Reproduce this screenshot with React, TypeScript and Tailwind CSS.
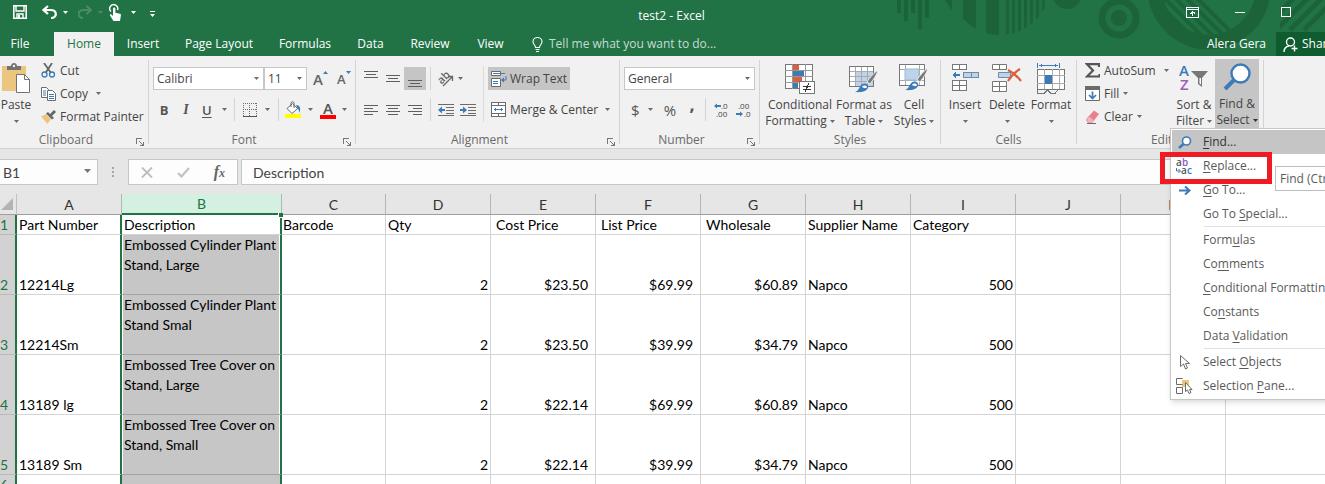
import { Fragment, type ReactNode } from "react";
import clsx from "clsx";

const GRAY = "#6b6b6b";
const BLUE = "#3d7ab8";

function Svg({ w, h, children, crisp = false }: { w: number; h: number; children: ReactNode; crisp?: boolean }) {
  return (
    <svg
      width={w}
      height={h}
      viewBox={`0 0 ${w} ${h}`}
      fill="none"
      aria-hidden="true"
      className="shrink-0"
      shapeRendering={crisp ? "crispEdges" : undefined}
    >
      {children}
    </svg>
  );
}

function Caret({ color = "#6b6b6b" }: { color?: string }) {
  return (
    <Svg w={5} h={3}>
      <path d="M0 0h5L2.500 3z" fill={color} />
    </Svg>
  );
}

/* ---------- title bar ---------- */

function HeaderArt() {
  return (
    <svg width="440" height="56" viewBox="885 0 440 56" className="absolute right-0 top-0" aria-hidden="true">
      <defs>
        <clipPath id="art-a">
          <circle cx="1000" cy="-15" r="50" />
        </clipPath>
        <clipPath id="art-b">
          <circle cx="1209" cy="-12" r="50" />
        </clipPath>
        <clipPath id="art-c">
          <path d="M1280 0h45v32h-45z" />
        </clipPath>
      </defs>
      <g fill="#1d6339">
        <path d="M897 0h4v13h-4zM904 0h4v21h-4zM911 0h4v13h-4zM918 0h4v29h-4zM925 0h4v18h-4zM945 0h7v11z" />
        <g clipPath="url(#art-a)">
          <path d="M963 0h13v40h-13zM986 0h13v40h-13zM1006 0h3v40h-3zM1012 0h3v40h-3zM1018 0h3v40h-3zM1024 0h3v40h-3zM1030 0h3v40h-3zM1036 0h3v40h-3zM1042 0h3v40h-3z" />
        </g>
        <circle cx="1067" cy="-5" r="14" />
        <circle cx="1119" cy="18" r="8" />
      </g>
      <g stroke="#1d6339" fill="none">
        <circle cx="1119" cy="18" r="17" strokeWidth="7" />
        <circle cx="1209" cy="-12" r="54" strokeWidth="15" />
        <g clipPath="url(#art-b)" strokeWidth="4">
          <path d="M1150-5l60 60M1161-5l60 60M1172-5l60 60M1183-5l60 60M1194-5l60 60" />
        </g>
        <g clipPath="url(#art-c)" strokeWidth="5">
          <path d="M1262 30l40-40M1276 30l40-40M1290 30l40-40M1304 30l40-40" />
        </g>
      </g>
    </svg>
  );
}

function QuickAccess() {
  return (
    <div className="flex h-6 items-center text-white">
      <button aria-label="Save" className="ml-[13px]">
        <Svg w={14} h={14}>
          <path d="M0.8 0.8h12.4v12.4H0.8z" stroke="#fff" strokeWidth="1.6" />
          <path d="M3 1v5h8V1M4 13V9h6v4" stroke="#fff" strokeWidth="1.4" />
          <path d="M5 10h2v3H5z" fill="#fff" />
        </Svg>
      </button>
      <button aria-label="Undo" className="ml-[15px] flex items-center gap-[6px]">
        <Svg w={15} h={14}>
          <path d="M6 1L1.5 5 6 9M2 5h6.500c7 0 7 8 0.500 8" stroke="#fff" strokeWidth="2.2" />
        </Svg>
        <Caret color="#fff" />
      </button>
      <button aria-label="Redo" className="ml-[10px] flex items-center gap-[6px]">
        <Svg w={14} h={14}>
          <path d="M8.500 1L13 5 8.500 9M12 5H6C-1 5-1 13 5 13" stroke="#4b8c68" strokeWidth="2" />
        </Svg>
        <Caret color="#4b8c68" />
      </button>
      <button aria-label="Touch mode" className="ml-[6px] flex items-center gap-[9px]">
        <Svg w={13} h={17}>
          <path d="M2 7.500A4 4 0 1 1 8.500 6" stroke="#fff" strokeWidth="1.4" />
          <path d="M4 4.500c0-1.500 2.400-1.500 2.400 0v4.300l4.600 1c.8.200 1 .8.900 1.500L11 17H4.500L1 11.500c-.5-1 .7-1.500 1.400-1L4 12z" fill="#fff" />
        </Svg>
        <Caret color="#fff" />
      </button>
      <button aria-label="Customize Quick Access Toolbar" className="ml-[14px] mt-1">
        <Svg w={5} h={6}>
          <path d="M0 0h5v1H0zM0 3h5L2.500 6z" fill="#fff" />
        </Svg>
      </button>
    </div>
  );
}

const TABS = [
  { name: "Insert", width: "w-[58px]" },
  { name: "Page Layout", width: "w-[94px]" },
  { name: "Formulas", width: "w-[78px]" },
  { name: "Data", width: "w-[53px]" },
  { name: "Review", width: "w-[66px]" },
  { name: "View", width: "w-[55px]" },
];

function TitleBar() {
  return (
    <header className="relative shrink-0 bg-[#217346] text-white">
      <HeaderArt />
      <div className="relative flex h-8 items-start">
        <div className="flex-1">
          <QuickAccess />
        </div>
        <h1 className="ml-[18px] pt-2">test2 - Excel</h1>
        <div className="flex h-6 flex-1 items-center justify-end gap-9">
          <button aria-label="Ribbon Display Options">
            <Svg w={13} h={11} crisp>
              <path d="M.5.5h12v10H.5zM0 2.500h13M6.500 9V4M4 6.500h1v-1h1M9 6.500H8v-1H7" stroke="#fff" />
            </Svg>
          </button>
          <button aria-label="Minimize">
            <Svg w={10} h={10} crisp>
              <path d="M0 5.500h10" stroke="#fff" />
            </Svg>
          </button>
          <button aria-label="Maximize" className="mr-[34px]">
            <Svg w={10} h={10} crisp>
              <path d="M.5.5h9v9h-9z" stroke="#fff" />
            </Svg>
          </button>
        </div>
      </div>
      <nav className="relative flex h-6 items-stretch">
        <button className="w-[54px] pr-[14px]">File</button>
        <button className="w-[60px] bg-[#f1f1f1] text-[#217346]">Home</button>
        {TABS.map((t) => (
          <button key={t.name} className={clsx("whitespace-nowrap", t.width)}>
            {t.name}
          </button>
        ))}
        <button className="ml-[14px] flex items-center gap-[6px] text-[#c6dccf]">
          <Svg w={11} h={15}>
            <path d="M3.500 10.500C3.500 8 1 7.500 1 4.800a4.500 4.300 0 0 1 9 0c0 2.700-2.500 3.200-2.500 5.700zM3.500 12.500h4M4 14.500h3" stroke="#fff" strokeWidth="1.1" />
          </Svg>
          Tell me what you want to do...
        </button>
        <div className="flex-1" />
        <button className="pr-[10px]">Alera Gera</button>
        <button className="flex w-[49px] items-center gap-1 overflow-hidden bg-[#0e5c2f] pl-[7px]">
          <Svg w={15} h={15}>
            <circle cx="7.500" cy="5" r="4" stroke="#fff" strokeWidth="1.4" />
            <path d="M1 15c0-3.500 2-5.500 5-6M11.500 8.500v6M8.500 11.500h6" stroke="#fff" strokeWidth="1.4" />
          </Svg>
          Share
        </button>
      </nav>
    </header>
  );
}

/* ---------- ribbon ---------- */

function Group({ label, width, launcher = false, children }: { label: string; width: string; launcher?: boolean; children: ReactNode }) {
  return (
    <section aria-label={label} className={clsx("flex shrink-0", width)}>
      <div className="flex min-w-0 flex-1 flex-col">
        <div className="flex h-[76px]">{children}</div>
        <div className="flex h-4 items-center text-[#6a6a6a]">
          <span className="flex-1 text-center">{label}</span>
          {launcher && (
            <button aria-label={`${label} settings`} className="mx-1 mt-1">
              <Svg w={8} h={8} crisp>
                <path d="M.5 6V.5H6M3 3l4 4M7.500 3.500v4h-4" stroke="#777" />
              </Svg>
            </button>
          )}
        </div>
      </div>
      <div className="my-1 w-px bg-[#d4d4d4]" />
    </section>
  );
}

function Rule() {
  return <span className="h-[23px] w-px bg-[#d4d4d4]" />;
}

function Tool({ label, on = false, children }: { label: string; on?: boolean; children: ReactNode }) {
  return (
    <button aria-label={label} className={clsx("flex h-[23px] w-[22px] items-center justify-center", on && "bg-[#c5c5c5]")}>
      {children}
    </button>
  );
}

function Combo({ label, value, width }: { label: string; value: string; width: string }) {
  return (
    <div className={clsx("relative", width)}>
      <select
        aria-label={label}
        defaultValue={value}
        className="h-[23px] w-full appearance-none border border-[#c6c6c6] bg-white pl-[3px]"
      >
        <option>{value}</option>
      </select>
      <span className="pointer-events-none absolute right-[5px] top-[10px]">
        <Caret />
      </span>
    </div>
  );
}

function BigButton({ lines, caret, width, icon }: { lines: string[]; caret: "inline" | "below"; width: string; icon: ReactNode }) {
  return (
    <button className={clsx("flex flex-col items-center whitespace-nowrap pt-[7px]", width)}>
      <span className="flex h-[34px]">{icon}</span>
      {lines.map((line, i) => (
        <span key={line} className="flex items-center gap-[3px] leading-4">
          {line}
          {caret === "inline" && i === lines.length - 1 && <Caret />}
        </span>
      ))}
      {caret === "below" && (
        <span className="flex h-4 items-center">
          <Caret />
        </span>
      )}
    </button>
  );
}

function Clipboard() {
  return (
    <Group label="Clipboard" width="w-[149px]" launcher>
      <BigButton
        lines={["Paste"]}
        caret="below"
        width="w-9 pr-1"
        icon={
          <Svg w={28} h={32}>
            <path d="M0 3h24v25H0z" fill="#ecc57f" />
            <path d="M5 7V3h4c0-4 6-4 6 0h4v4z" fill="#737373" />
            <circle cx="12" cy="3" r="1.200" fill="#f1f1f1" />
            <path d="M14.500 11.500h8l5 5v13h-13z" fill="#fff" stroke="#737373" />
            <path d="M22.500 11.500v5h5" stroke="#737373" />
          </Svg>
        }
      />
      <div className="flex flex-col pl-[5px] pt-[3px]">
        <button className="flex h-[23px] items-center gap-1">
          <Svg w={15} h={15}>
            <path d="M3 0l7 10M11 0L4.500 10" stroke="#666" strokeWidth="1.800" />
            <circle cx="3.500" cy="11.500" r="2.500" stroke={BLUE} strokeWidth="1.300" />
            <circle cx="11" cy="11.500" r="2.500" stroke={BLUE} strokeWidth="1.300" />
          </Svg>
          Cut
        </button>
        <button className="flex h-[23px] items-center gap-1">
          <Svg w={15} h={14}>
            <path d="M.5.5h5l2 2v8h-7z" fill="#fff" stroke={GRAY} />
            <path d="M2 4h3M2 6h3M2 8h3" stroke={BLUE} />
            <path d="M6.500 3.500h5l3 3v7h-8z" fill="#fff" stroke={GRAY} />
            <path d="M8 7.500h5M8 9.500h5M8 11.500h5" stroke={BLUE} />
          </Svg>
          Copy
          <span className="pl-1">
            <Caret />
          </span>
        </button>
        <button className="flex h-[23px] items-center gap-1 whitespace-nowrap">
          <Svg w={15} h={14}>
            <path d="M0 6.500l5-2.500 5 5-3.500 5z" fill="#ecc57f" />
            <path d="M5 3.500l2-1.500 6 6-2 1.500zM9 4l4-4 2 2-4 4z" fill="#666" />
          </Svg>
          Format Painter
        </button>
      </div>
    </Group>
  );
}

function FontGroup() {
  return (
    <Group label="Font" width="w-[207px]" launcher>
      <div className="flex flex-col gap-2 pl-1 pt-[11px]">
        <div className="flex items-center">
          <Combo label="Font" value="Calibri" width="w-[111px]" />
          <Combo label="Font size" value="11" width="w-[43px]" />
          <div className="flex items-center gap-[9px] pl-[6px]">
            <button aria-label="Increase Font Size" className="flex items-start text-[15px] font-semibold leading-5 text-[#666]">
              A
              <Svg w={5} h={6}>
                <path d="M0 5h5L2.500 2z" fill={BLUE} />
              </Svg>
            </button>
            <button aria-label="Decrease Font Size" className="flex items-start text-[13px] font-semibold leading-5 text-[#666]">
              A
              <Svg w={5} h={6}>
                <path d="M0 2h5L2.500 5z" fill={BLUE} />
              </Svg>
            </button>
          </div>
        </div>
        <div className="flex items-center text-[13px] text-[#555]">
          <Tool label="Bold">
            <b>B</b>
          </Tool>
          <Tool label="Italic">
            <i className="font-['Liberation_Serif',serif] text-[14px] font-bold">I</i>
          </Tool>
          <button aria-label="Underline" className="flex w-8 items-center gap-[10px] pl-[5px] font-semibold">
            <span className="underline underline-offset-2">U</span>
            <Caret />
          </button>
          <span className="w-[5px]" />
          <Rule />
          <button aria-label="Borders" className="flex w-[43px] items-center justify-center gap-2">
            <Svg w={14} h={14} crisp>
              <path d="M.5 0v13M6.500 0v13M13.500 0v13M0 .5h14M0 6.500h14" stroke={GRAY} strokeDasharray="1 1" />
              <path d="M0 13.500h14" stroke="#555" />
            </Svg>
            <Caret />
          </button>
          <Rule />
          <button aria-label="Fill Color" className="flex items-center gap-[6px] pl-[6px]">
            <Svg w={17} h={17}>
              <path d="M7.500 2.500l5 5-5.500 5-5-5z" fill="#fff" stroke="#666" />
              <path d="M6 6V2.500c0-2.500 3-2.500 3 0V7" stroke="#666" />
              <path d="M11 4c4 0 5 3 3.500 8-.5-3-1.500-4-2-4.500z" fill={BLUE} />
              <path d="M0 13h16v4H0z" fill="#ff0" />
            </Svg>
            <Caret />
          </button>
          <button aria-label="Font Color" className="flex items-center gap-[6px] pl-[7px]">
            <span className="w-4 border-b-4 border-[#f00] text-center text-[15px] font-semibold leading-[14px]">A</span>
            <Caret />
          </button>
        </div>
      </div>
    </Group>
  );
}

function Lines({ rows }: { rows: [number, number, number][] }) {
  return (
    <Svg w={14} h={16} crisp>
      {rows.map(([x, y, w]) => (
        <rect key={y} x={x} y={y} width={w} height={1} fill="#5f5f5f" />
      ))}
    </Svg>
  );
}

function IndentIcon({ right = false }: { right?: boolean }) {
  return (
    <Svg w={16} h={14}>
      <path d="M0 1.500h16M8 4.500h8M8 7.500h8M8 10.500h8M0 12.500h16" stroke={GRAY} />
      <path d={right ? "M0 6h3V3.500L7 7 3 10.500V8H0z" : "M7 6H4V3.500L0 7l4 3.500V8h3z"} fill={BLUE} />
    </Svg>
  );
}

function Alignment() {
  return (
    <Group label="Alignment" width="w-[264px]" launcher>
      <div className="flex flex-col gap-2 pl-1 pt-[11px]">
        <div className="flex items-center">
          <Tool label="Top Align">
            <Lines rows={[[0, 0, 14], [2, 3, 10], [0, 6, 14]]} />
          </Tool>
          <Tool label="Middle Align">
            <Lines rows={[[0, 4, 14], [2, 7, 10], [0, 10, 14]]} />
          </Tool>
          <Tool label="Bottom Align" on>
            <Lines rows={[[0, 9, 14], [2, 12, 10], [0, 15, 14]]} />
          </Tool>
          <span className="w-1" />
          <Rule />
          <button aria-label="Orientation" className="flex items-center gap-1 pl-[6px]">
            <Svg w={17} h={16}>
              <text x="1" y="11" fontSize="11" fontWeight="600" fill="#666" transform="rotate(-45 6 8)">
                ab
              </text>
              <path d="M6 15l9-9M11 5.500h4.500V10" stroke="#666" strokeWidth="1.300" />
            </Svg>
            <Caret />
          </button>
        </div>
        <div className="flex items-center">
          <Tool label="Align Left">
            <Lines rows={[[0, 3, 14], [0, 6, 9], [0, 9, 14], [0, 12, 9]]} />
          </Tool>
          <Tool label="Center">
            <Lines rows={[[0, 3, 14], [2, 6, 10], [0, 9, 14], [2, 12, 10]]} />
          </Tool>
          <Tool label="Align Right">
            <Lines rows={[[0, 3, 14], [5, 6, 9], [0, 9, 14], [5, 12, 9]]} />
          </Tool>
          <span className="w-1" />
          <Rule />
          <span className="w-1" />
          <Tool label="Decrease Indent">
            <IndentIcon />
          </Tool>
          <Tool label="Increase Indent">
            <IndentIcon right />
          </Tool>
        </div>
      </div>
      <span className="ml-1 mt-[10px] h-[56px] w-px bg-[#dcdcdc]" />
      <div className="flex flex-col items-start gap-2 pl-1 pt-[11px]">
        <button className="flex h-[23px] items-center gap-[3px] whitespace-nowrap bg-[#c5c5c5] px-[3px]">
          <Svg w={16} h={16}>
            <path d="M.5.5h9v4h-9zM.5 7.500h9v8h-9z" fill="#fff" stroke={GRAY} />
            <path d="M2 2.500h12M2 10.500h5M2 12.500h5M15 5v4h-4" stroke={BLUE} />
            <path d="M10 9l3-2.500v5z" fill={BLUE} />
          </Svg>
          Wrap Text
        </button>
        <button className="flex h-[23px] items-center gap-[3px] whitespace-nowrap pl-[3px]">
          <Svg w={16} h={15} crisp>
            <path d="M.5.5h14v14H.5zM0 3.500h15M0 11.500h15M7.500 0v3M7.500 12v3" stroke={GRAY} fill="#fff" />
            <path d="M3 7.500h9M4.500 6v3M10.500 6v3" stroke={BLUE} />
          </Svg>
          Merge &amp; Center
          <span className="pl-1">
            <Caret />
          </span>
        </button>
      </div>
    </Group>
  );
}

function NumberGroup() {
  return (
    <Group label="Number" width="w-[140px]" launcher>
      <div className="flex flex-col gap-2 pl-1 pt-[11px]">
        <Combo label="Number Format" value="General" width="w-[131px]" />
        <div className="flex h-[23px] items-center text-[15px] text-[#555]">
          <button className="flex w-[33px] items-center gap-2 pl-[7px]">
            $
            <Caret />
          </button>
          <button className="w-[26px]">%</button>
          <button className="w-[18px] pb-3 text-[18px] font-bold leading-4">,</button>
          <span className="w-1" />
          <Rule />
          <button aria-label="Increase Decimal" className="pl-2">
            <Svg w={16} h={15}>
              <path d="M0 4l3-2.500V3h4v2H3v1.500z" fill={BLUE} />
              <text x="7" y="7" fontSize="8" fill="#444">.0</text>
              <text x="2" y="15" fontSize="8" fill="#444">.00</text>
            </Svg>
          </button>
          <button aria-label="Decrease Decimal" className="pl-[6px]">
            <Svg w={16} h={15}>
              <path d="M7 12L4 9.500V11H0v2h4v1.500z" fill={BLUE} />
              <text x="2" y="7" fontSize="8" fill="#444">.00</text>
              <text x="8" y="15" fontSize="8" fill="#444">.0</text>
            </Svg>
          </button>
        </div>
      </div>
    </Group>
  );
}

function Brush() {
  return (
    <>
      <path d="M29 7c-3 2-9 8-11 12l3 2c3-4 7-9 8-14z" fill="#7a7a7a" stroke="#f1f1f1" />
      <path d="M6 29c5-1 4-8 9-8.500 3 0 5 2 4 4.500-2 4-8 4.500-13 4z" fill={BLUE} />
      <path d="M13 24c1-2 4-2 5 0-1 2-3 1-5 0z" fill="#fff" />
    </>
  );
}

function Styles() {
  return (
    <Group label="Styles" width="w-[181px]">
      <span className="w-1" />
      <BigButton
        lines={["Conditional", "Formatting"]}
        caret="inline"
        width="w-[72px]"
        icon={
          <Svg w={30} h={31} crisp>
            <path d="M.5 1.500h27v24H.5z" fill="#fff" stroke="#777" />
            <path d="M0 7.500h28M0 13.500h28M0 19.500h28M7.500 1v25M20.500 1v25" stroke="#999" />
            <path d="M8 2h6v5H8zM8 14h9v5H8z" fill="#d9603b" />
            <path d="M8 8h11v5H8zM8 20h5v5H8z" fill={BLUE} />
            <path d="M14.500 18.500h15v12h-15z" fill="#fff" stroke="#777" />
            <path d="M18 23h8M18 26h8M24 20l-4 9" stroke="#333" />
          </Svg>
        }
      />
      <BigButton
        lines={["Format as", "Table"]}
        caret="inline"
        width="w-[56px]"
        icon={
          <Svg w={30} h={31}>
            <path d="M.5 3.500h24v20H.5z" fill="#fff" stroke="#777" />
            <path d="M6 9h18v14H6z" fill="#bcd3ea" />
            <path d="M0 8.500h25M0 13.500h25M0 18.500h25M6.500 3v20M12.500 3v20M18.500 3v20" stroke="#aaa" />
            <path d="M.5 3.500h24v20H.5z" stroke="#777" />
            <Brush />
          </Svg>
        }
      />
      <BigButton
        lines={["Cell", "Styles"]}
        caret="inline"
        width="w-11"
        icon={
          <Svg w={30} h={31}>
            <path d="M.5 1.500h25v21H.5z" fill="#fff" stroke="#777" />
            <path d="M0 6.500h26M0 17.500h26M6.500 1v21M20.500 1v21" stroke="#aaa" />
            <path d="M6 6h14v11H6z" fill="#bcd3ea" stroke="#9db8d4" />
            <path d="M.5 1.500h25v21H.5z" stroke="#777" />
            <g transform="translate(0 -2)">
              <Brush />
            </g>
          </Svg>
        }
      />
    </Group>
  );
}

function Cells() {
  return (
    <Group label="Cells" width="w-[136px]">
      <span className="w-1" />
      <BigButton
        lines={["Insert"]}
        caret="below"
        width="w-10"
        icon={
          <Svg w={27} h={29} crisp>
            <path d="M.5 1.500h14v5H.5zM7.500 1v5M.5 17.500h14v10H.5zM7.500 17v10M0 22.500h15" fill="#fff" stroke="#777" />
            <path d="M11.500 9.500h15v5h-15zM19.500 9v6" fill="#bcd3ea" stroke="#6f8ba8" />
            <path d="M0 12l4-3v2h4v2H4v2z" fill={BLUE} />
          </Svg>
        }
      />
      <BigButton
        lines={["Delete"]}
        caret="below"
        width="w-11"
        icon={
          <Svg w={30} h={29}>
            <path d="M.5 1.500h14v5H.5zM7.500 1v5M.5 18.500h14v10H.5zM7.500 18v10M0 23.500h15" fill="#fff" stroke="#777" />
            <path d="M6.500 9.500h12v5h-12z" fill="#bcd3ea" stroke="#6f8ba8" />
            <path d="M16 7c4 2 9 6 13 11M28 6c-5 3-9 7-12 12" stroke="#d9603b" strokeWidth="2.200" />
          </Svg>
        }
      />
      <BigButton
        lines={["Format"]}
        caret="below"
        width="w-11"
        icon={
          <Svg w={28} h={31} crisp>
            <path d="M.5 0v5M22.500 0v5M2 2.500h19M4.500 1v3M18.500 1v3" stroke={BLUE} />
            <path d="M.5 6.500h27v20H.5z" fill="#fff" stroke="#777" />
            <path d="M0 12.500h28M0 20.500h28M7.500 6v20M15.500 6v20M22.500 6v20" stroke="#aaa" />
            <path d="M8 12h7v9H8z" fill={BLUE} />
            <path d="M.5 26v4h7l3-3 3 3h5l3-4" stroke="#777" />
          </Svg>
        }
      />
    </Group>
  );
}

/* ---------- find & select menu ---------- */

const FindIcon = (
  <Svg w={14} h={13}>
    <circle cx="8.500" cy="5" r="4" fill="#fff" stroke={BLUE} strokeWidth="1.600" />
    <path d="M5.500 8L1 12" stroke={BLUE} strokeWidth="2.400" />
  </Svg>
);
const ReplaceIcon = (
  <Svg w={17} h={17}>
    <text x="0" y="8" fontSize="10" fontWeight="600" fill="#555">a</text>
    <text x="6" y="8" fontSize="10" fontWeight="600" fill="#8e5bb5">b</text>
    <text x="5" y="16" fontSize="10" fontWeight="600" fill="#555">a</text>
    <text x="11" y="16" fontSize="10" fontWeight="600" fill={BLUE}>c</text>
    <path d="M.5 10v3H4M2.500 11l2 2-2 2" stroke={BLUE} />
  </Svg>
);
const GoToIcon = (
  <Svg w={12} h={9}>
    <path d="M0 4.500h10M6 .500l4.500 4L6 8.500" stroke={BLUE} strokeWidth="2" />
  </Svg>
);
const PointerIcon = (
  <Svg w={10} h={15}>
    <path d="M.5.5v11l3-2.500 2 5 2-1-2-4.500h4z" fill="#fff" stroke={GRAY} />
  </Svg>
);
const PaneIcon = (
  <Svg w={17} h={16}>
    <path d="M6 2h7v7H6z" fill="#ecc57f" />
    <path d="M.5 6.500v-6h6M.5 6.500h6M.5 9.500h6v6h-6z" stroke={GRAY} />
    <path d="M9.500 4.500v9l2-1.500 1.500 3.500 2-1-1.500-3h2.500z" fill="#fff" stroke={GRAY} />
  </Svg>
);

type MenuEntry = { text: string; icon?: ReactNode } | null;

// "_" marks the access key, null is a separator
const FIND_MENU: MenuEntry[] = [
  { text: "_Find...", icon: FindIcon },
  { text: "_Replace...", icon: ReplaceIcon },
  { text: "_Go To...", icon: GoToIcon },
  { text: "Go To _Special..." },
  null,
  { text: "Form_ulas" },
  { text: "Co_mments" },
  { text: "_Conditional Formatting" },
  { text: "Co_nstants" },
  { text: "Data _Validation" },
  null,
  { text: "Select _Objects", icon: PointerIcon },
  { text: "Selection _Pane...", icon: PaneIcon },
];

function AccessText({ text }: { text: string }) {
  const [before, rest] = text.split("_");
  return (
    <span>
      {before}
      <span className="underline underline-offset-2">{rest[0]}</span>
      {rest.slice(1)}
    </span>
  );
}

function FindMenu() {
  return (
    <div className="absolute -left-[45px] top-full z-10 w-[196px] border border-[#c6c6c6] bg-white p-px text-[#5a5a5a] shadow-md">
      <ul>
        {FIND_MENU.map((item, i) => (
          <Fragment key={i}>
            {item ? (
              <li>
                <button className={clsx("flex h-6 w-full items-center whitespace-nowrap", i === 0 && "bg-[#c5c5c5] text-[#333]")}>
                  <span className="flex w-[31px] pl-1 pr-[6px]">
                    <span className="flex w-[17px] justify-center">{item.icon}</span>
                  </span>
                  <AccessText text={item.text} />
                </button>
              </li>
            ) : (
              <li className="mb-px ml-8 h-px bg-[#e1e1e1]" />
            )}
          </Fragment>
        ))}
      </ul>
      <div className="absolute -left-[11px] top-[23px] h-8 w-28 border-[5px] border-[#ed1c24]" />
      <div role="tooltip" className="absolute left-[104px] top-[37px] whitespace-nowrap border border-[#bebebe] bg-white px-1 py-[3px] leading-[17px]">
        Find (Ctrl+F)
      </div>
    </div>
  );
}

function Editing() {
  return (
    <Group label="Editing" width="w-[187px]">
      <div className="flex w-24 flex-col pl-2 pt-[3px]">
        <button className="flex h-[23px] items-center gap-1">
          <Svg w={15} h={15}>
            <path d="M14 4V1.200H2L8 7.500l-6 6h12.500V11" stroke="#555" strokeWidth="2.200" />
          </Svg>
          AutoSum
          <span className="pl-1">
            <Caret />
          </span>
        </button>
        <button className="flex h-[23px] items-center gap-1">
          <Svg w={15} h={15}>
            <path d="M.5.500h14v14H.5z" fill="#fff" stroke={GRAY} />
            <path d="M0 0h15v4H0z" fill={GRAY} />
            <path d="M7.500 5.500V12M4 9l3.500 3.500L11 9" stroke={BLUE} strokeWidth="1.700" />
          </Svg>
          Fill
          <Caret />
        </button>
        <button className="flex h-[23px] items-center gap-1">
          <Svg w={15} h={14}>
            <path d="M4 6l5-5.500 5 3.500-5 6.500z" fill="#e8808f" />
            <path d="M4 6l5 4.500L6.500 13H3.500L1.500 10z" fill="#f3b5bd" stroke="#e8808f" strokeWidth=".8" />
            <path d="M2 13.500h9" stroke={GRAY} />
          </Svg>
          Clear
          <Caret />
        </button>
      </div>
      <BigButton
        lines={["Sort &", "Filter"]}
        caret="inline"
        width="w-[42px]"
        icon={
          <Svg w={30} h={30}>
            <text x="0" y="13" fontSize="15" fontWeight="600" fill={BLUE}>A</text>
            <text x="1" y="27" fontSize="15" fontWeight="600" fill="#9a5fb8">Z</text>
            <path d="M12 8h17l-6 7v9l-4-3v-6z" fill="#777" />
            <path d="M20.500 15v5.500l1.500 1V15z" fill="#fff" />
          </Svg>
        }
      />
      <div className="relative mt-[3px] h-[69px]">
        <div className="flex h-full bg-[#c5c5c5]">
          <button className="flex w-11 flex-col items-center whitespace-nowrap pt-1">
            <span className="flex h-[34px]">
              <Svg w={28} h={28}>
                <circle cx="17.500" cy="10.500" r="9" fill="#fff" stroke={BLUE} strokeWidth="2.400" />
                <path d="M11 17L2 26" stroke={BLUE} strokeWidth="4" />
              </Svg>
            </span>
            <span className="leading-4">Find &amp;</span>
            <span className="flex items-center gap-[3px] leading-4">
              Select
              <Caret color="#333" />
            </span>
          </button>
        </div>
        <FindMenu />
      </div>
    </Group>
  );
}

/* ---------- formula bar ---------- */

function FormulaBar() {
  return (
    <div className="flex h-[45px] shrink-0 items-start bg-[#e6e6e6] pt-[10px] font-[Lato,sans-serif] text-[14px] text-[#444]">
      <div className="relative w-[98px]">
        <input
          aria-label="Name Box"
          defaultValue="B1"
          className="h-[26px] w-full border border-l-0 border-[#c6c6c6] bg-[#fdfdfd] pl-[3px]"
        />
        <button aria-label="Name list" className="absolute right-[7px] top-[10px]">
          <Svg w={7} h={4}>
            <path d="M0 0h7L3.500 4z" fill="#777" />
          </Svg>
        </button>
      </div>
      <div className="flex h-[26px] w-[30px] items-center justify-center">
        <Svg w={2} h={10} crisp>
          <path d="M0 0h2v2H0zM0 4h2v2H0zM0 8h2v2H0z" fill="#a6a6a6" />
        </Svg>
      </div>
      <div className="flex h-[26px] w-[110px] items-center justify-between border border-[#c6c6c6] bg-[#fdfdfd] px-3">
        <button aria-label="Cancel">
          <Svg w={12} h={11}>
            <path d="M1 .500l10 10M11 .500l-10 10" stroke="#bdbdbd" strokeWidth="1.800" />
          </Svg>
        </button>
        <button aria-label="Enter">
          <Svg w={13} h={11}>
            <path d="M1 6l3.500 3.500L12 1" stroke="#c3c3c3" strokeWidth="2.200" />
          </Svg>
        </button>
        <button aria-label="Insert Function" className="font-['Liberation_Serif',serif] text-[16px] font-bold italic leading-4 text-[#666]">
          f<span className="text-[12px]">x</span>
        </button>
      </div>
      <input
        aria-label="Formula Bar"
        defaultValue="Description"
        className="ml-[3px] h-[26px] min-w-0 flex-1 border border-r-0 border-[#c6c6c6] bg-[#fdfdfd] pl-[11px]"
      />
    </div>
  );
}

/* ---------- sheet ---------- */

const COLUMNS = ["A", "B", "C", "D", "E", "F", "G", "H", "I", "J", "K", ""];
const HEADINGS = ["Part Number", "Description", "Barcode", "Qty", "Cost Price", "List Price", "Wholesale", "Supplier Name", "Category", "", "", ""];

const ITEMS = [
  ["12214Lg", "Embossed Cylinder Plant\nStand, Large", "", "2", "$23.50", "$69.99", "$60.89", "Napco", "500", "", "", ""],
  ["12214Sm", "Embossed Cylinder Plant\nStand Smal", "", "2", "$23.50", "$39.99", "$34.79", "Napco", "500", "", "", ""],
  ["13189 lg", "Embossed Tree Cover on\nStand, Large", "", "2", "$22.14", "$69.99", "$60.89", "Napco", "500", "", "", ""],
  ["13189 Sm", "Embossed Tree Cover on\nStand, Small", "", "2", "$22.14", "$39.99", "$34.79", "Napco", "500", "", "", ""],
];

const isMoney = (col: number) => col >= 4 && col <= 6;
const isCount = (col: number) => col === 3 || col === 8;

function edge(col: number) {
  if (col === COLUMNS.length - 1) return "";
  return col < 2 ? "border-r-2 border-r-[#217346]" : "border-r border-r-[#d4d4d4]";
}

function RowHead({ n }: { n: number }) {
  return (
    <th className="border-b border-r-2 border-b-[#bababa] border-r-[#217346] bg-[#d2d2d2] p-0 text-left align-bottom font-normal text-[#217346]">
      {n}
    </th>
  );
}

function Sheet() {
  return (
    <main className="min-h-0 flex-1 overflow-hidden bg-white">
      <table className="w-full min-w-[1325px] table-fixed border-separate border-spacing-0 font-[Lato,sans-serif] text-[14px] leading-[19px] text-black">
        <colgroup>
          <col className="w-[17px]" />
          <col className="w-[105px]" />
          <col className="w-[160px]" />
          <col className="w-[104px]" />
          {COLUMNS.slice(3, 11).map((c) => (
            <col key={c} className="w-[105px]" />
          ))}
          <col />
        </colgroup>
        <thead>
          <tr className="h-5 bg-[#e6e6e6]">
            <th aria-label="Select all" className="border-b border-r border-b-[#9f9f9f] border-r-[#c0c0c0] p-0">
              <Svg w={13} h={12}>
                <path d="M13 0v12H1z" fill="#b3b3b3" />
              </Svg>
            </th>
            {COLUMNS.map((c, i) => (
              <th
                key={i}
                className={clsx(
                  "p-0 font-normal",
                  c && "border-r border-r-[#b5b5b5]",
                  c === "B" ? "border-b-2 border-b-[#217346] bg-[#d3f0e0] text-[#217346]" : "border-b border-b-[#9f9f9f] text-[#333]",
                )}
              >
                {c}
              </th>
            ))}
          </tr>
        </thead>
        <tbody>
          <tr className="h-5">
            <RowHead n={1} />
            {HEADINGS.map((h, i) => (
              <td
                key={i}
                className={clsx(
                  "whitespace-nowrap border-b border-b-[#d4d4d4] p-0",
                  isMoney(i) ? "pl-[5px]" : i === 2 ? "pl-px" : "pl-[2px]",
                  edge(i),
                  i === 1 && "relative",
                )}
              >
                {h}
                {i === 1 && <span className="absolute -right-[3px] -top-[2px] size-[5px] border-b border-l border-white bg-[#217346]" />}
              </td>
            ))}
          </tr>
          {ITEMS.map((row, r) => (
            <tr key={r} className="h-[60px]">
              <RowHead n={r + 2} />
              {row.map((value, i) => (
                <td
                  key={i}
                  className={clsx(
                    "whitespace-pre border-b p-0",
                    edge(i),
                    i === 1
                      ? "border-b-[#a3a3a3] bg-[#c6c6c6] pl-[2px] align-top leading-5 shadow-[inset_1px_0_0_#fff,inset_-1px_0_0_#fff]"
                      : "border-b-[#d4d4d4] align-bottom",
                    isMoney(i) && "pr-[7px] text-right",
                    isCount(i) && "pr-[2px] text-right",
                    !isMoney(i) && !isCount(i) && "pl-[2px]",
                  )}
                >
                  {value}
                </td>
              ))}
            </tr>
          ))}
          <tr className="h-5">
            <RowHead n={6} />
            {COLUMNS.map((_, i) => (
              <td key={i} className={clsx("border-b border-b-[#d4d4d4] p-0", edge(i), i === 1 && "bg-[#c6c6c6]")} />
            ))}
          </tr>
        </tbody>
      </table>
    </main>
  );
}

export default function App() {
  return (
    <div className="flex h-screen flex-col overflow-hidden font-['Open_Sans','Noto_Sans',sans-serif] text-[12px] leading-4 text-[#444]">
      <TitleBar />
      <div className="relative z-10 flex h-[93px] shrink-0 border-b border-[#d2d2d2] bg-[#f1f1f1]">
        <Clipboard />
        <FontGroup />
        <Alignment />
        <NumberGroup />
        <Styles />
        <Cells />
        <Editing />
      </div>
      <FormulaBar />
      <Sheet />
    </div>
  );
}
